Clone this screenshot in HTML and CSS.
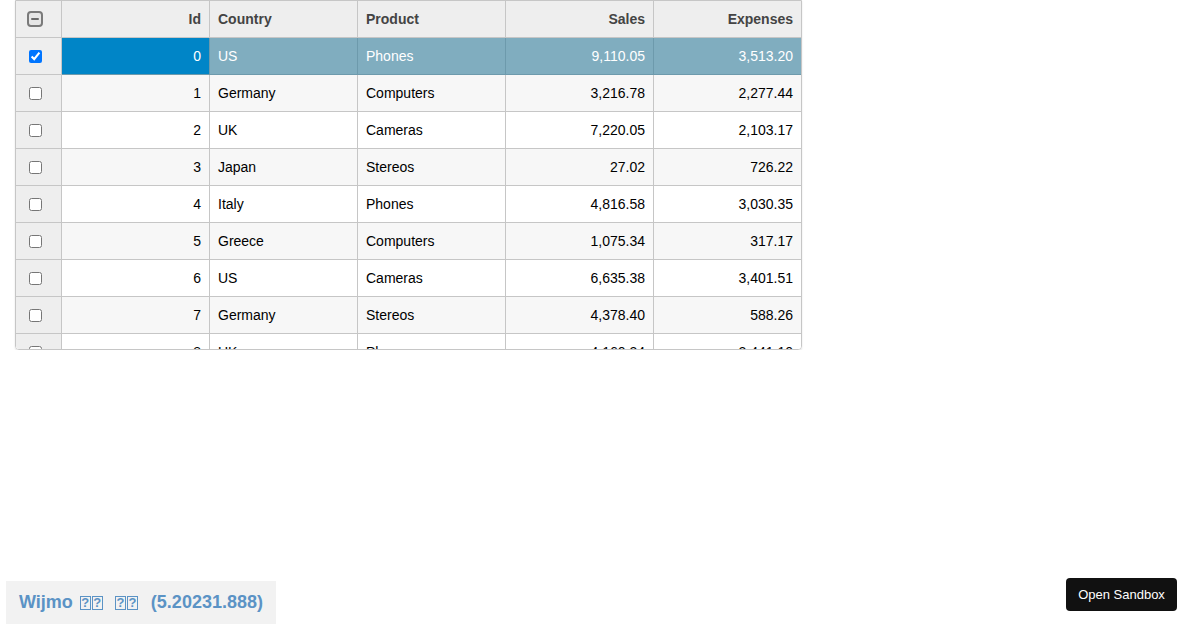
FILE: index.html
```html
<!DOCTYPE html>
<html>
<head>
<meta charset="utf-8">
<link rel="stylesheet" href="styles.css">
</head>
<body>
<div class="grid">
  <div class="row head">
    <div class="cell rh"><span class="indet"><span class="dash"></span></span></div>
    <div class="cell num">Id</div>
    <div class="cell">Country</div>
    <div class="cell">Product</div>
    <div class="cell num">Sales</div>
    <div class="cell num">Expenses</div>
  </div>
  <div class="row sel">
    <div class="cell rh"><input type="checkbox" checked></div>
    <div class="cell num cur">0</div>
    <div class="cell">US</div>
    <div class="cell">Phones</div>
    <div class="cell num">9,110.05</div>
    <div class="cell num">3,513.20</div>
  </div>
  <div class="row alt">
    <div class="cell rh"><input type="checkbox"></div>
    <div class="cell num">1</div>
    <div class="cell">Germany</div>
    <div class="cell">Computers</div>
    <div class="cell num">3,216.78</div>
    <div class="cell num">2,277.44</div>
  </div>
  <div class="row">
    <div class="cell rh"><input type="checkbox"></div>
    <div class="cell num">2</div>
    <div class="cell">UK</div>
    <div class="cell">Cameras</div>
    <div class="cell num">7,220.05</div>
    <div class="cell num">2,103.17</div>
  </div>
  <div class="row alt">
    <div class="cell rh"><input type="checkbox"></div>
    <div class="cell num">3</div>
    <div class="cell">Japan</div>
    <div class="cell">Stereos</div>
    <div class="cell num">27.02</div>
    <div class="cell num">726.22</div>
  </div>
  <div class="row">
    <div class="cell rh"><input type="checkbox"></div>
    <div class="cell num">4</div>
    <div class="cell">Italy</div>
    <div class="cell">Phones</div>
    <div class="cell num">4,816.58</div>
    <div class="cell num">3,030.35</div>
  </div>
  <div class="row alt">
    <div class="cell rh"><input type="checkbox"></div>
    <div class="cell num">5</div>
    <div class="cell">Greece</div>
    <div class="cell">Computers</div>
    <div class="cell num">1,075.34</div>
    <div class="cell num">317.17</div>
  </div>
  <div class="row">
    <div class="cell rh"><input type="checkbox"></div>
    <div class="cell num">6</div>
    <div class="cell">US</div>
    <div class="cell">Cameras</div>
    <div class="cell num">6,635.38</div>
    <div class="cell num">3,401.51</div>
  </div>
  <div class="row alt">
    <div class="cell rh"><input type="checkbox"></div>
    <div class="cell num">7</div>
    <div class="cell">Germany</div>
    <div class="cell">Stereos</div>
    <div class="cell num">4,378.40</div>
    <div class="cell num">588.26</div>
  </div>
  <div class="row">
    <div class="cell rh"><input type="checkbox"></div>
    <div class="cell num">8</div>
    <div class="cell">UK</div>
    <div class="cell">Phones</div>
    <div class="cell num">4,160.34</div>
    <div class="cell num">2,441.10</div>
  </div>
</div>

<div class="badge">Wijmo <span class="pair p1"><span class="tofu">?</span><span class="tofu">?</span></span> <span class="pair p2"><span class="tofu">?</span><span class="tofu">?</span></span> (5.20231.888)</div>
<button class="sandbox">Open Sandbox</button>
</body>
</html>
```

FILE: styles.css
```css
html, body {
  margin: 0;
  padding: 0;
  background: #fff;
  font-family: "Liberation Sans", Arial, sans-serif;
}

.grid {
  margin-left: 15px;
  width: 787px;
  height: 350px;
  box-sizing: border-box;
  border: 1px solid #c6c6c6;
  border-radius: 0 0 4px 4px;
  overflow: hidden;
  box-shadow: 0 1px 2px rgba(0,0,0,0.12);
  font-size: 14px;
  color: #000;
}

.row {
  display: grid;
  grid-template-columns: 46px repeat(5, 148px);
  height: 37px;
  background: #fff;
}

.row.alt { background: #f7f7f7; }

.row.head {
  background: #eee;
  color: #444;
  font-weight: bold;
  height: 37px;
}

.cell {
  box-sizing: border-box;
  border-right: 1px solid #c6c6c6;
  border-bottom: 1px solid #c6c6c6;
  padding: 0 8px;
  display: flex;
  align-items: center;
  white-space: nowrap;
  overflow: hidden;
}

.cell.num { justify-content: flex-end; }

.cell.rh {
  background: #eee;
  padding: 0 0 0 13px;
}

.row.head .cell.rh { padding-left: 11px; }

.cell.rh input {
  margin: 0;
  width: 13px;
  height: 13px;
}

.row.sel { background: #80adbf; color: #fff; }
.row.sel .cell { border-right-color: #6d9aac; border-bottom-color: #6d9aac; }
.row.sel .cell.rh { border-right-color: #c6c6c6; border-bottom-color: #c6c6c6; }
.row.sel .cell.cur { background: #0085c7; }

.indet {
  box-sizing: border-box;
  width: 16px;
  height: 16px;
  border: 2px solid #7a7a7a;
  border-radius: 4px;
  background: #e6e6e6;
  display: flex;
  align-items: center;
  justify-content: center;
}

.dash {
  width: 8px;
  height: 2px;
  background: #6a6a6a;
  border-radius: 1px;
}

.badge {
  position: fixed;
  left: 6px;
  bottom: 6px;
  height: 43px;
  line-height: 43px;
  box-sizing: border-box;
  padding: 0 13px 0 13px;
  background: #f2f2f2;
  color: #5b93c5;
  font-weight: bold;
  font-size: 18px;
  white-space: nowrap;
}

.pair {
  display: inline-flex;
  gap: 1px;
  vertical-align: middle;
  line-height: normal;
}

.pair.p1 { margin-left: 2px; }
.pair.p2 { margin-left: 7px; margin-right: 8px; }

.tofu {
  display: block;
  box-sizing: border-box;
  width: 11px;
  height: 14px;
  border: 1px solid currentColor;
  font-size: 13px;
  line-height: 12px;
  text-align: center;
  font-weight: bold;
}

.sandbox {
  position: fixed;
  right: 23px;
  bottom: 19px;
  width: 111px;
  height: 33px;
  border: none;
  border-radius: 4px;
  background: #111;
  color: #fff;
  font-family: "Liberation Sans", Arial, sans-serif;
  font-size: 13px;
  padding: 0;
}
```
